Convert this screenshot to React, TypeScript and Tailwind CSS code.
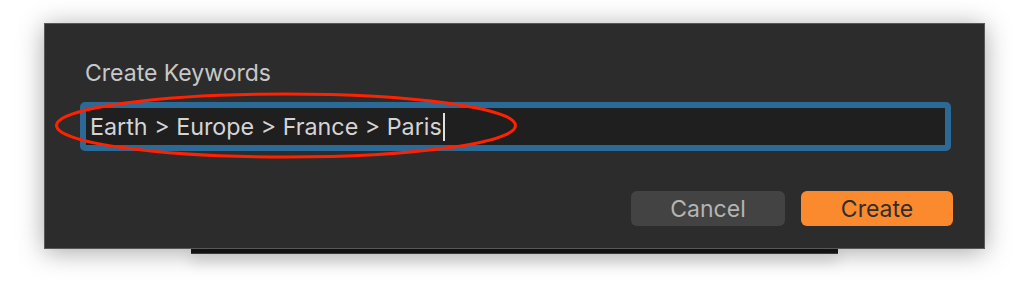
import React from "react";

export default function App() {
  return (
    <div
      className="relative w-[1030px] h-[284px] bg-white pt-[23px] pl-[44px] overflow-hidden"
      style={{ fontFamily: "Inter, 'Liberation Sans', sans-serif" }}
    >
      <div className="relative z-10 w-[941px] h-[226px] bg-[#2c2c2c] border border-[#585858] shadow-[0_3px_24px_rgba(0,0,0,0.35)] pl-[35px] pr-[31px]">
        <div className="mt-[35px] ml-[5px] text-[23px] leading-[28px] text-[#c8c8c8]">
          Create Keywords
        </div>
        <div className="mt-[15px] w-[871px] h-[49px] rounded-[5px] border-[6px] border-[#2b6a96] bg-[#1f1f1f] pl-[4px] flex items-center">
          <span className="text-[23.3px] leading-[28px] text-[#d4d4d4]">
            Earth &gt; Europe &gt; France &gt; Paris
          </span>
          <span className="ml-[1px] w-[2px] h-[28px] bg-[#e0e0e0]" />
        </div>
        <div className="mt-[40px] flex justify-end gap-[16px]">
          <button className="w-[154px] h-[35px] rounded-[6px] bg-[#434343] text-[23px] leading-[28px] text-[#b4b4b4]">
            Cancel
          </button>
          <button className="w-[152px] h-[35px] rounded-[6px] bg-[#fb8a2e] text-[23px] leading-[28px] text-[#2e2e2e]">
            Create
          </button>
        </div>
      </div>
      <div className="ml-[147px] w-[647px] h-[5px] bg-[#171717] border-b border-[#444] shadow-[0_6px_14px_rgba(0,0,0,0.25)]" />
      <svg
        className="absolute left-[53px] top-[91px] z-20"
        width="466"
        height="69"
        viewBox="0 0 466 69"
      >
        <ellipse cx="233" cy="34.5" rx="229.5" ry="31.5" fill="none" stroke="#ff2200" strokeWidth="3" />
      </svg>
    </div>
  );
}
